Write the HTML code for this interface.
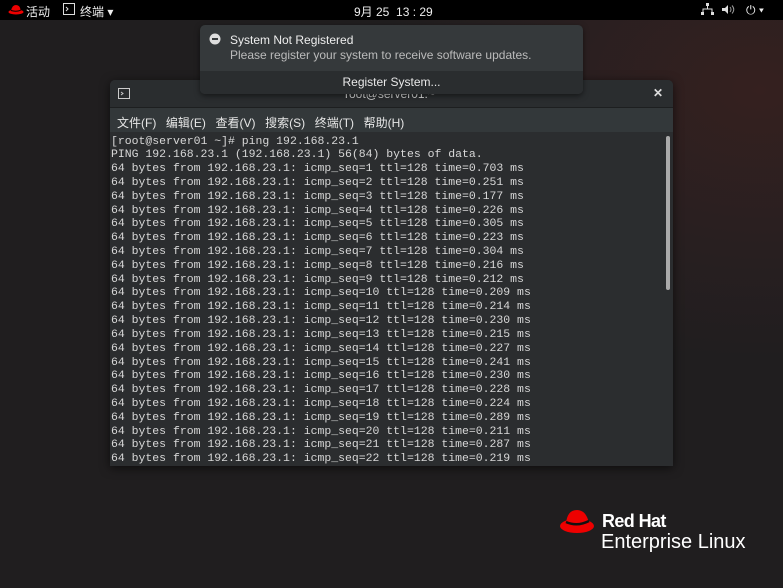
<!DOCTYPE html>
<html><head><meta charset="utf-8"><style>
*{margin:0;padding:0;box-sizing:border-box}
body{width:783px;height:588px;overflow:hidden;position:relative;font-family:"Liberation Sans","Noto Sans CJK SC",sans-serif;
background:radial-gradient(ellipse 450px 320px at 760px 90px,#35201f 0%,#281f20 50%,#201e1f 85%),#1f1e1f;}
.top{position:absolute;left:0;top:0;width:783px;height:20px;background:#000;color:#eee;font-size:12px}
.top span{position:absolute;top:3px}
.term{position:absolute;left:110px;top:80px;width:563px;height:386px;background:#2d3133;border-radius:5px 5px 0 0;box-shadow:0 2px 10px rgba(0,0,0,.6)}
.title{height:28px;background:#2a2d2f;border-bottom:1px solid #1d1f20;border-radius:5px 5px 0 0;position:relative;color:#ddd;font-size:12px}
.menu{height:24px;background:#33383a;color:#e6e6e6;font-size:12px;padding:6px 0 0 7px}
.menu span{margin-right:9.6px}
.content{position:absolute;left:0;top:52px;width:563px;height:334px;background:#2b2d2f}
pre{font-family:"Liberation Mono",monospace;font-size:11.47px;line-height:13.82px;color:#d8d8d8;padding:2.5px 0 0 1px}
.sb{position:absolute;left:556px;top:4px;width:4px;height:154px;background:#aaa;border-radius:2px}
.notif{position:absolute;left:200px;top:25px;width:383px;height:69px;background:#35393b;border-radius:5px;color:#eee;box-shadow:0 2px 6px rgba(0,0,0,.5)}
.notif .btn{position:absolute;left:0;top:46px;width:383px;height:23px;background:#2a2d2f;border-radius:0 0 5px 5px;text-align:center;font-size:12px;padding-top:4px;color:#e8e8e8}
</style></head><body>
<div class="top">
<svg style="position:absolute;left:8px;top:4px" width="16" height="11" viewBox="0 0 16 11"><ellipse cx="8" cy="8" rx="7.5" ry="2.5" fill="#e00"/><path d="M3 7 Q4 1 8 1 Q12 1 12.5 6 Z" fill="#e00"/><path d="M3 6.5 Q8 8 12.7 6.3" stroke="#000" stroke-width="1" fill="none"/></svg>
<span style="left:26px">活动</span>
<svg style="position:absolute;left:63px;top:3px" width="12" height="12"><rect x=".5" y=".5" width="11" height="11" fill="none" stroke="#ddd"/><path d="M3 4l2 2-2 2" stroke="#ddd" fill="none"/></svg>
<span style="left:80px">终端 ▾</span>
<span style="left:354px">9月 25&nbsp; 13 : 29</span>
<svg style="position:absolute;left:701px;top:3px" width="13" height="13"><rect x="5" y="0" width="3" height="3" fill="#ddd"/><path d="M6.5 3v3M2 9V6h9v3" stroke="#ddd" fill="none"/><rect x="0" y="9" width="3" height="3" fill="#ddd"/><rect x="10" y="9" width="3" height="3" fill="#ddd"/></svg>
<svg style="position:absolute;left:722px;top:4px" width="13" height="11"><path d="M0 4h3l3-3v9l-3-3H0z" fill="#ddd"/><path d="M8 3q2 2.5 0 5M10 1.5q3.5 4 0 8" stroke="#999" fill="none"/></svg>
<span style="left:746px">⏻ ▾</span>
</div>
<div class="term">
<div class="title"><svg style="position:absolute;left:8px;top:8px" width="12" height="11"><rect x=".5" y=".5" width="11" height="10" fill="none" stroke="#ccc"/><path d="M3 4l2 1.5-2 1.5" stroke="#ccc" fill="none"/></svg><span style="position:absolute;left:235px;top:7px">root@server01:~</span><span style="position:absolute;right:10px;top:6px;font-weight:bold">✕</span></div>
<div class="menu"><span>文件(F)</span><span>编辑(E)</span><span>查看(V)</span><span>搜索(S)</span><span>终端(T)</span><span>帮助(H)</span></div>
<div class="content"><pre>[root@server01 ~]# ping 192.168.23.1
PING 192.168.23.1 (192.168.23.1) 56(84) bytes of data.
64 bytes from 192.168.23.1: icmp_seq=1 ttl=128 time=0.703 ms
64 bytes from 192.168.23.1: icmp_seq=2 ttl=128 time=0.251 ms
64 bytes from 192.168.23.1: icmp_seq=3 ttl=128 time=0.177 ms
64 bytes from 192.168.23.1: icmp_seq=4 ttl=128 time=0.226 ms
64 bytes from 192.168.23.1: icmp_seq=5 ttl=128 time=0.305 ms
64 bytes from 192.168.23.1: icmp_seq=6 ttl=128 time=0.223 ms
64 bytes from 192.168.23.1: icmp_seq=7 ttl=128 time=0.304 ms
64 bytes from 192.168.23.1: icmp_seq=8 ttl=128 time=0.216 ms
64 bytes from 192.168.23.1: icmp_seq=9 ttl=128 time=0.212 ms
64 bytes from 192.168.23.1: icmp_seq=10 ttl=128 time=0.209 ms
64 bytes from 192.168.23.1: icmp_seq=11 ttl=128 time=0.214 ms
64 bytes from 192.168.23.1: icmp_seq=12 ttl=128 time=0.230 ms
64 bytes from 192.168.23.1: icmp_seq=13 ttl=128 time=0.215 ms
64 bytes from 192.168.23.1: icmp_seq=14 ttl=128 time=0.227 ms
64 bytes from 192.168.23.1: icmp_seq=15 ttl=128 time=0.241 ms
64 bytes from 192.168.23.1: icmp_seq=16 ttl=128 time=0.230 ms
64 bytes from 192.168.23.1: icmp_seq=17 ttl=128 time=0.228 ms
64 bytes from 192.168.23.1: icmp_seq=18 ttl=128 time=0.224 ms
64 bytes from 192.168.23.1: icmp_seq=19 ttl=128 time=0.289 ms
64 bytes from 192.168.23.1: icmp_seq=20 ttl=128 time=0.211 ms
64 bytes from 192.168.23.1: icmp_seq=21 ttl=128 time=0.287 ms
64 bytes from 192.168.23.1: icmp_seq=22 ttl=128 time=0.219 ms</pre><div class="sb"></div></div>
</div>
<div class="notif">
<svg style="position:absolute;left:9px;top:8px" width="12" height="12"><circle cx="6" cy="6" r="5.5" fill="#ddd"/><rect x="3" y="5" width="6" height="2" fill="#35393b"/></svg>
<div style="position:absolute;left:30px;top:8px;font-size:12px">System Not Registered</div>
<div style="position:absolute;left:30px;top:23px;font-size:12px;color:#bbb">Please register your system to receive software updates.</div>
<div class="btn">Register System...</div>
</div>
<svg style="position:absolute;left:559px;top:508px" width="38" height="28" viewBox="0 0 38 28"><ellipse cx="18" cy="18" rx="17" ry="7" fill="#e00"/><path d="M7 16 Q8 2 18 2 Q27 2 30 15 Z" fill="#e00"/><path d="M7 14 Q18 19 30 13" stroke="#111" stroke-width="2.5" fill="none"/></svg>
<div style="position:absolute;left:602px;top:511px;color:#fff;font-weight:bold;font-size:18px;letter-spacing:-.6px">Red Hat</div>
<div style="position:absolute;left:601px;top:531px;color:#fff;font-size:20px">Enterprise Linux</div>
</body></html>
